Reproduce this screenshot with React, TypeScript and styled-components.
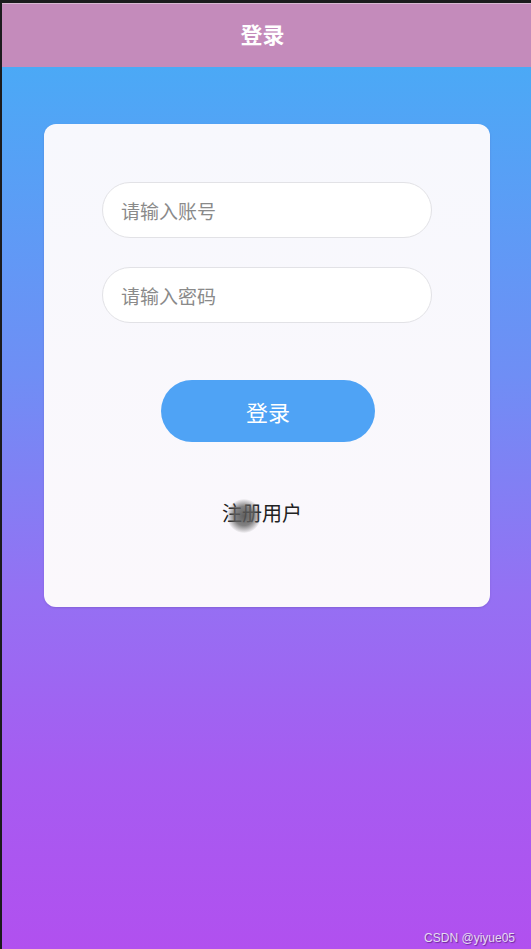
import styled, { createGlobalStyle } from 'styled-components'

const GlobalStyle = createGlobalStyle`
  html, body {
    margin: 0;
    padding: 0;
    background: #1b1b1d;
  }
  body {
    font-family: "Noto Sans CJK SC", "Noto Sans", "Liberation Sans", sans-serif;
  }
  * {
    box-sizing: border-box;
  }
`

function App() {
  return (
    <>
      <GlobalStyle />
      <Frame>
        <Page>
          <Header>
            <Title>登录</Title>
          </Header>
          <Body>
            <Card>
              <Field placeholder="请输入账号" />
              <Field placeholder="请输入密码" type="password" $gap={29} />
              <LoginButton>登录</LoginButton>
              <Register>
                注册用户
                <Cursor />
              </Register>
            </Card>
            <Watermark>CSDN @yiyue05</Watermark>
          </Body>
        </Page>
      </Frame>
    </>
  )
}

const Frame = styled.div`
  width: 531px;
  height: 949px;
  padding: 3px 0 0 2px;
  background: #1b1b1d;
`

const Page = styled.div`
  display: flex;
  flex-direction: column;
  height: 100%;
`

const Header = styled.header`
  height: 64px;
  display: flex;
  align-items: center;
  justify-content: center;
  background: #c48bbb;
  border-top: 1px solid #d8b8d2;
`

const Title = styled.h1`
  margin: 0 0 5px -8px;
  font-size: 22px;
  font-weight: 700;
  color: #ffffff;
`

const Body = styled.main`
  flex: 1;
  position: relative;
  padding: 57px 41px 0 42px;
  background: linear-gradient(180deg, #4ba9f6 0%, #6f8ef5 35%, #9570f3 60%, #a65cf1 80%, #b150ef 100%);
`

const Card = styled.section`
  height: 483px;
  display: flex;
  flex-direction: column;
  align-items: center;
  padding: 58px 0 0;
  background: linear-gradient(180deg, #f7f8fd 0%, #fbf8fc 100%);
  border-radius: 12px;
  box-shadow: 0 1px 2px rgba(80, 60, 140, 0.25);
`

const Field = styled.input<{ $gap?: number }>`
  width: 330px;
  height: 56px;
  margin-top: ${(p) => p.$gap ?? 0}px;
  padding: 0 18px;
  border: 1px solid #e2e2e6;
  border-radius: 28px;
  background: #ffffff;
  outline: none;
  font-family: inherit;
  font-size: 19px;
  color: #333;
  &::placeholder {
    color: #8a8a8a;
  }
`

const LoginButton = styled.button`
  width: 214px;
  height: 62px;
  margin: 57px 0 0 2px;
  border: none;
  border-radius: 31px;
  background: #4fa3f5;
  color: #ffffff;
  font-family: inherit;
  font-size: 22px;
  cursor: pointer;
`

const Register = styled.div`
  position: relative;
  margin: 56px 10px 0 0;
  font-size: 20px;
  color: #222222;
`

const Cursor = styled.span`
  position: absolute;
  left: 5px;
  top: 1px;
  width: 34px;
  height: 34px;
  border-radius: 50%;
  background: radial-gradient(circle, rgba(80, 80, 80, 0.9) 0%, rgba(100, 100, 100, 0.8) 40%, rgba(140, 140, 140, 0) 72%);
`

const Watermark = styled.div`
  position: absolute;
  right: 16px;
  bottom: 4px;
  font-family: "Liberation Sans", Arial, sans-serif;
  font-size: 12px;
  color: #e6dcf2;
  text-shadow: 1px 1px 1px rgba(60, 20, 90, 0.6);
`

export default App
